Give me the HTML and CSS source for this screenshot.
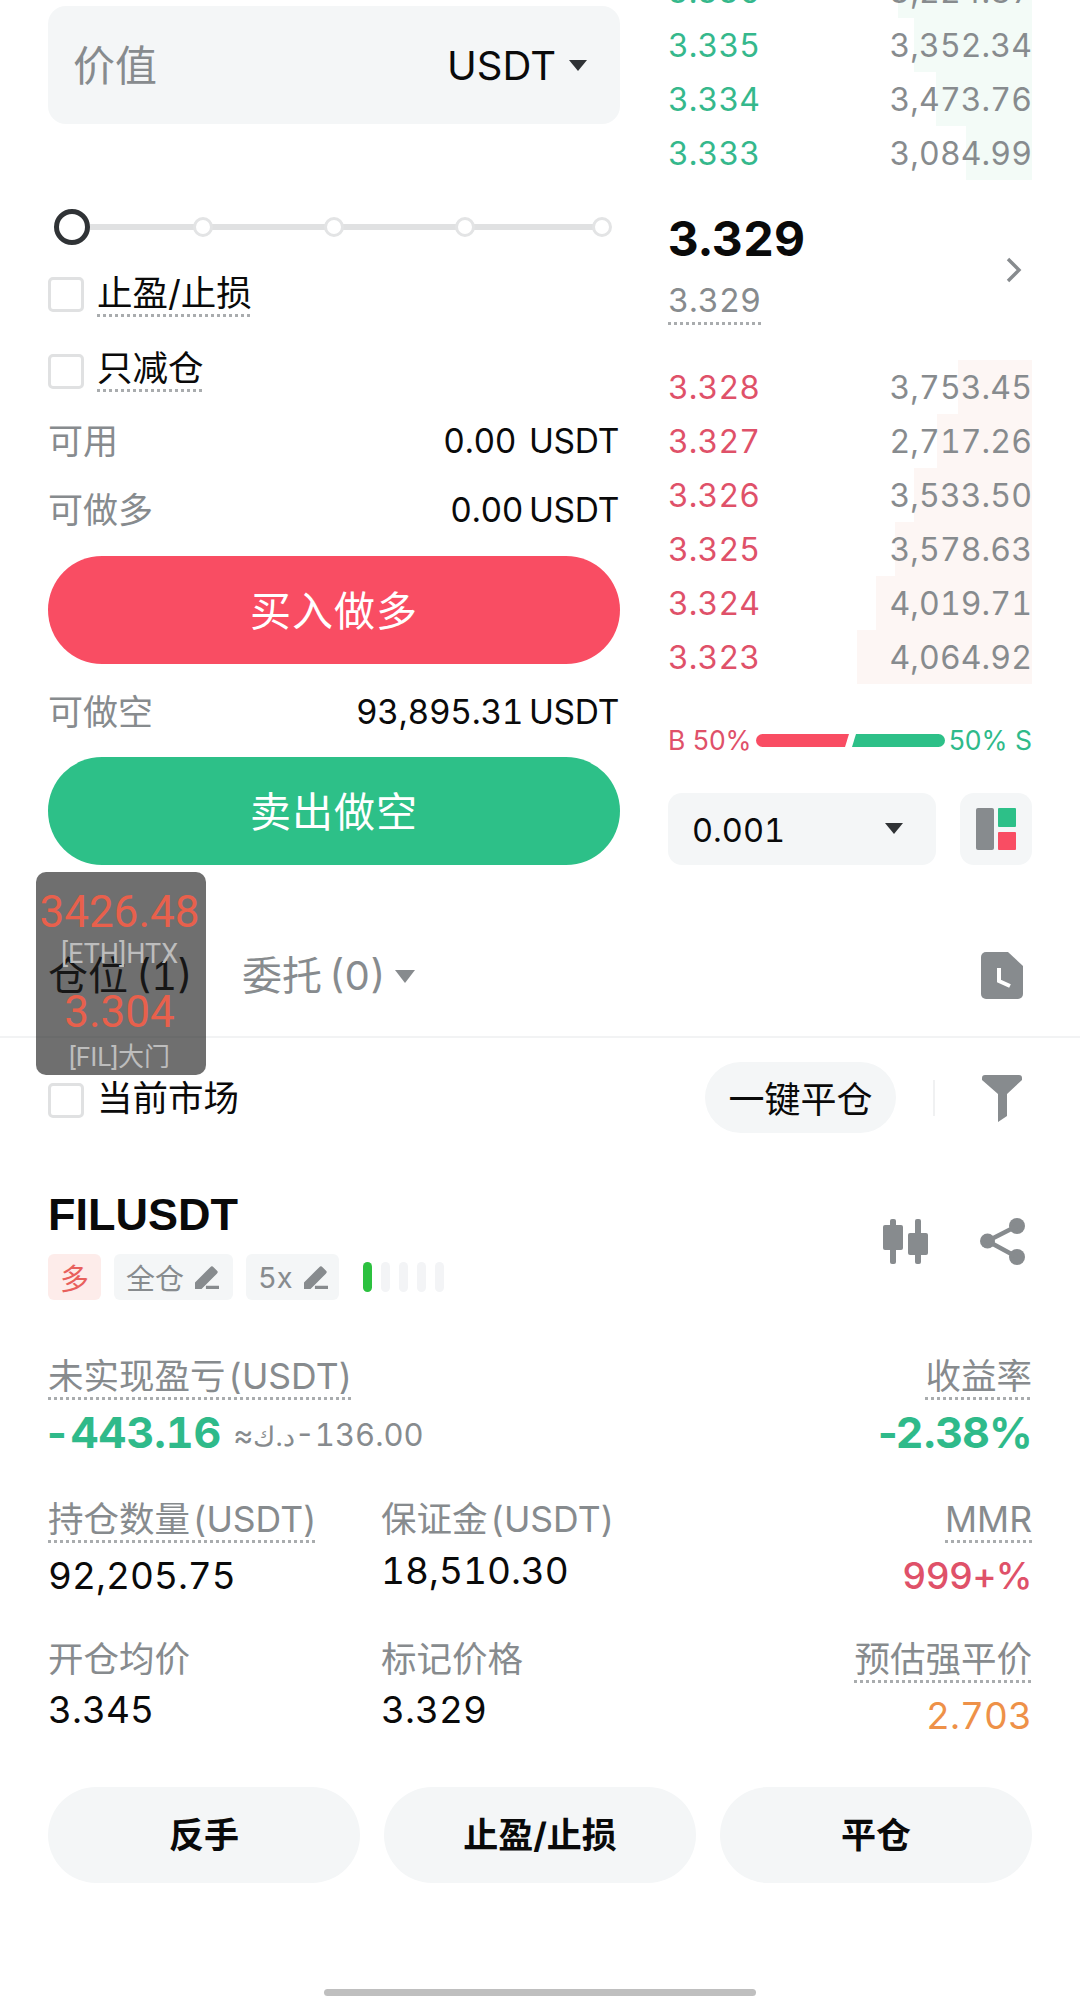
FILE: index.html
```html
<!DOCTYPE html>
<html lang="zh-CN">
<head>
<meta charset="utf-8">
<title>FILUSDT</title>
<link rel="stylesheet" href="styles.css">
</head>
<body>
<div class="page">
  <section class="trade">
    <div class="form">
      <div class="field">
        <span class="field-label">价值</span>
        <span class="field-unit">USDT<i class="caret caret-dark"></i></span>
      </div>
      <div class="slider">
        <span class="knob"></span>
        <span class="stop stop-a"></span>
        <span class="stop"></span>
        <span class="stop"></span>
        <span class="stop stop-z"></span>
      </div>
      <label class="check check-tp"><span class="box"></span><span class="dot">止盈/止损</span></label>
      <label class="check check-ro"><span class="box"></span><span class="dot">只减仓</span></label>
      <div class="kv kv-avail"><span class="muted">可用</span><span><span class="amt">0.00</span> USDT</span></div>
      <div class="kv kv-tight"><span class="muted">可做多</span><span>0.00 USDT</span></div>
      <button class="cta cta-buy">买入做多</button>
      <div class="kv kv-tight"><span class="muted">可做空</span><span>93,895.31 USDT</span></div>
      <button class="cta cta-sell">卖出做空</button>
    </div>

    <div class="book">
      <div class="rows rows-ask">
        <div class="row ask"><i class="depth" style="width:134px"></i><span class="price">3.336</span><span class="qty">3,224.87</span></div>
        <div class="row ask"><i class="depth" style="width:118px"></i><span class="price">3.335</span><span class="qty">3,352.34</span></div>
        <div class="row ask"><i class="depth" style="width:96px"></i><span class="price">3.334</span><span class="qty">3,473.76</span></div>
        <div class="row ask"><i class="depth" style="width:66px"></i><span class="price">3.333</span><span class="qty">3,084.99</span></div>
      </div>
      <div class="mid">
        <div>
          <div class="last">3.329</div>
          <div class="mark"><span class="dot">3.329</span></div>
        </div>
        <svg class="chev" width="16" height="26" viewBox="0 0 16 26"><path d="M2 2l11 11L2 24" fill="none" stroke="#878b8e" stroke-width="3.4"/></svg>
      </div>
      <div class="rows rows-bid">
        <div class="row bid"><i class="depth" style="width:74px"></i><span class="price">3.328</span><span class="qty">3,753.45</span></div>
        <div class="row bid"><i class="depth" style="width:95px"></i><span class="price">3.327</span><span class="qty">2,717.26</span></div>
        <div class="row bid"><i class="depth" style="width:118px"></i><span class="price">3.326</span><span class="qty">3,533.50</span></div>
        <div class="row bid"><i class="depth" style="width:137px"></i><span class="price">3.325</span><span class="qty">3,578.63</span></div>
        <div class="row bid"><i class="depth" style="width:156px"></i><span class="price">3.324</span><span class="qty">4,019.71</span></div>
        <div class="row bid"><i class="depth" style="width:175px"></i><span class="price">3.323</span><span class="qty">4,064.92</span></div>
      </div>
      <div class="ratio">
        <span class="red">B 50%</span>
        <svg width="189" height="13" viewBox="0 0 189 13"><path d="M6.5 0H93l-4 13H6.500a6.500 6.500 0 0 1 0-13z" fill="#f94d63"/><path d="M100 0h82.500a6.500 6.500 0 0 1 0 13H96z" fill="#2dc088"/></svg>
        <span class="green">50% S</span>
      </div>
      <div class="tools">
        <div class="select"><span>0.001</span><i class="caret caret-dark"></i></div>
        <div class="layout">
          <svg width="40" height="42" viewBox="0 0 40 42"><rect width="18" height="42" rx="2" fill="#878b8e"/><rect x="22" width="18" height="19" rx="1" fill="#2dc088"/><rect x="22" y="24" width="18" height="18" rx="1" fill="#f94d63"/></svg>
        </div>
      </div>
    </div>
  </section>

  <nav class="tabs">
    <span class="tab tab-on">仓位 (1)</span>
    <span class="tab">委托 (0)<i class="caret caret-gray"></i></span>
    <svg class="doc" width="42" height="47" viewBox="0 0 42 47"><path d="M5 0h22l15 14v28a5 5 0 0 1-5 5H5a5 5 0 0 1-5-5V5a5 5 0 0 1 5-5z" fill="#878b8e"/><path d="M18 16v13l11 5" fill="none" stroke="#fff" stroke-width="4"/></svg>
  </nav>

  <div class="filter">
    <label class="check"><span class="box"></span><span class="market">当前市场</span></label>
    <div class="filter-right">
      <button class="pill">一键平仓</button>
      <span class="sep"></span>
      <svg class="funnel" width="40" height="47" viewBox="0 0 40 47"><path d="M3 0h34a3 3 0 0 1 3 3v2L25 19v22l-9 6V19L0 5V3a3 3 0 0 1 3-3z" fill="#878b8e"/></svg>
    </div>
  </div>

  <div class="head">
    <div>
      <h1 class="symbol">FILUSDT</h1>
      <div class="tags">
        <span class="tag tag-long">多</span>
        <span class="tag">全仓<svg class="pen" width="24" height="24" viewBox="0 0 22 22"><path d="M0 22v-6L14 2a2 2 0 0 1 3 0l3 3a2 2 0 0 1 0 3L6 22z M10 19h12v3H10z" fill="#878b8e"/></svg></span>
        <span class="tag tag-lev">5x<svg class="pen" width="24" height="24" viewBox="0 0 22 22"><path d="M0 22v-6L14 2a2 2 0 0 1 3 0l3 3a2 2 0 0 1 0 3L6 22z M10 19h12v3H10z" fill="#878b8e"/></svg></span>
        <span class="risk"><i class="on"></i><i></i><i></i><i></i><i></i></span>
      </div>
    </div>
    <div class="head-icons">
      <svg width="46" height="45" viewBox="0 0 46 45"><g fill="#878b8e"><rect x="7" width="6" height="45" rx="2"/><rect y="6" width="20" height="25" rx="2"/><rect x="32" width="6" height="45" rx="2"/><rect x="25" y="14" width="20" height="22" rx="2"/></g></svg>
      <svg width="45" height="47" viewBox="0 0 45 47"><g fill="#878b8e"><circle cx="37" cy="8" r="8"/><circle cx="7.500" cy="23" r="7.500"/><circle cx="37" cy="39" r="8"/></g><path d="M37 8L7.500 23 37 39" fill="none" stroke="#878b8e" stroke-width="4.500"/></svg>
    </div>
  </div>

  <div class="stats">
    <div class="stat stat-wide">
      <div class="label"><span class="dot">未实现盈亏 (USDT)</span></div>
      <div class="value big pnl green">-443.16<span class="approx">≈<bdi>د.ك</bdi>-136.00</span></div>
    </div>
    <div class="stat right">
      <div class="label"><span class="dot">收益率</span></div>
      <div class="value big green">-2.38%</div>
    </div>

    <div class="stat stat-mid">
      <div class="label"><span class="dot">持仓数量 (USDT)</span></div>
      <div class="value">92,205.75</div>
    </div>
    <div class="stat stat-mid stat-up">
      <div class="label">保证金 (USDT)</div>
      <div class="value">18,510.30</div>
    </div>
    <div class="stat stat-mid right">
      <div class="label"><span class="dot">MMR</span></div>
      <div class="value medium red">999+%</div>
    </div>

    <div class="stat stat-low stat-up">
      <div class="label">开仓均价</div>
      <div class="value">3.345</div>
    </div>
    <div class="stat stat-low stat-up">
      <div class="label">标记价格</div>
      <div class="value">3.329</div>
    </div>
    <div class="stat stat-low right">
      <div class="label"><span class="dot">预估强平价</span></div>
      <div class="value orange">2.703</div>
    </div>
  </div>

  <div class="actions">
    <button class="action">反手</button>
    <button class="action">止盈/止损</button>
    <button class="action">平仓</button>
  </div>

  <div class="home-bar"></div>

  <aside class="ticker">
    <div class="tick-price">3426.48</div>
    <div class="tick-name">[ETH]HTX</div>
    <div class="tick-price">3.304</div>
    <div class="tick-name">[FIL]大门</div>
  </aside>
</div>
</body>
</html>
```
FILE: styles.css
```css
* { box-sizing: border-box; }
html, body { margin: 0; padding: 0; background: #fff; }
body {
  font-family: "Inter", "Noto Sans CJK SC", sans-serif;
  font-variant-numeric: tabular-nums;
  color: #0a0a0a;
  overflow: hidden;
}
.page { position: relative; width: 1080px; height: 2000px; overflow: hidden; }
button { font-family: inherit; border: 0; padding: 0; }
i { font-style: normal; display: block; }

.muted { color: #878b8e; }
.red { color: #df5169; }
.green { color: #2fba8a; }
.orange { color: #ee9148; }

.dot {
  text-decoration: underline dotted #a9acae 3px;
  text-underline-offset: 8px;
  text-decoration-skip-ink: none;
}

.caret { width: 0; height: 0; border-style: solid; border-color: transparent; border-width: 11px 9px 0; }
.caret-dark { border-top-color: #303336; }
.caret-gray { border-top-color: #878b8e; border-width: 13px 10px 0; margin-left: 9px; }

/* top area */
.trade {
  display: grid;
  grid-template-columns: 572px 364px;
  column-gap: 48px;
  padding: 0 48px;
  height: 865px;
}
.form { display: flex; flex-direction: column; padding-top: 6px; }
.field {
  height: 118px;
  padding: 0 33px 0 25px;
  display: flex;
  align-items: center;
  justify-content: space-between;
  background: #f4f6f7;
  border-radius: 18px;
}
.field-label { font-size: 42px; color: #878b8e; padding-bottom: 5px; }
.field-unit { display: flex; align-items: center; gap: 13px; font-size: 40px; }
.slider {
  height: 36px;
  margin-top: 85px;
  padding: 0 8px 0 6px;
  display: flex;
  align-items: center;
  gap: 111px;
  background: linear-gradient(#e0e1e2, #e0e1e2) center / calc(100% - 40px) 6px no-repeat;
}
.knob { width: 36px; height: 36px; border: 5.5px solid #303336; border-radius: 50%; background: #fff; flex: none; }
.stop { width: 20px; height: 20px; border: 3px solid #e3e4e5; border-radius: 50%; background: #fff; flex: none; }
.stop-a { margin-left: -8px; }
.stop-z { margin-left: 6px; }

.check { display: flex; align-items: center; gap: 13px; font-size: 35.5px; height: 35px; }
.check-tp { margin-top: 32px; }
.check-ro { margin-top: 42px; }
.check-tp .dot { margin-bottom: 8px; }
.check-ro .dot { margin-bottom: 12px; }
.box { width: 36px; height: 35px; border: 3px solid #e0e1e2; border-radius: 5px; flex: none; background: #fff; }

.kv { display: flex; align-items: center; justify-content: space-between; height: 40px; font-size: 33.5px; letter-spacing: -.3px; padding-right: 1px; }
.kv .muted { font-size: 35px; letter-spacing: 0; margin-bottom: 5px; }
.kv-avail { margin-top: 32px; }
.kv-tight { margin-top: 29px; word-spacing: -3px; }
.amt { margin-right: 4px; }

.cta {
  height: 108px;
  margin-top: 26px;
  padding-bottom: 5px;
  border-radius: 54px;
  color: #fff;
  font-size: 41px;
  letter-spacing: 1px;
}
.cta-buy { background: #f94d63; }
.cta-sell { background: #2dc088; margin-top: 25px; }
.cta-buy + .kv { margin-top: 28px; }

/* order book */
.book { display: flex; flex-direction: column; }
.rows-ask { margin-top: -36px; }
.row {
  position: relative;
  height: 54px;
  display: flex;
  align-items: center;
  justify-content: space-between;
  font-size: 32px;
  letter-spacing: .1px;
}
.depth { position: absolute; right: 0; top: 0; bottom: 0; }
.ask .depth { background: #f3fbf7; }
.bid .depth { background: #fdf6f4; }
.price, .qty { position: relative; }
.ask .price { color: #35b88c; }
.bid .price { color: #df5169; }
.qty { color: #878b8e; }

.mid { display: flex; align-items: center; justify-content: space-between; margin-top: 29px; padding-right: 10px; }
.chev { margin-top: 8px; }
.last { font-size: 48px; line-height: 60px; font-weight: 700; }
.mark { font-size: 32.5px; line-height: 44px; margin-top: 10px; margin-bottom: -1px; color: #878b8e; }
.mark .dot { text-underline-offset: 10px; }
.rows-bid { margin-top: 38px; }

.ratio { display: flex; align-items: center; justify-content: space-between; height: 40px; margin-top: 36px; font-size: 26.5px; font-variant-numeric: normal; }
.tools { display: flex; justify-content: space-between; height: 72px; margin-top: 33px; }
.select {
  width: 268px;
  padding: 0 33px 2px 24px;
  display: flex;
  align-items: center;
  justify-content: space-between;
  background: #f4f6f7;
  border-radius: 14px;
  font-size: 32.5px;
  line-height: 1;
}
.select span { margin-top: 6px; }
.layout { width: 72px; display: flex; align-items: center; justify-content: center; background: #f4f6f7; border-radius: 14px; }

/* tabs */
.tabs {
  height: 173px;
  padding: 51px 57px 0 48px;
  display: flex;
  align-items: flex-start;
  border-bottom: 2px solid #f2f3f4;
}
.tab { display: flex; align-items: center; font-size: 40px; word-spacing: -3px; line-height: 120px; height: 120px; color: #878b8e; }
.tab + .tab { margin-left: 49px; word-spacing: -4px; }
.tab-on { color: #0a0a0a; }
.doc { margin-left: auto; margin-top: 36px; }

/* filter */
.filter {
  height: 71px;
  margin-top: 24px;
  padding: 0 58px 0 48px;
  display: flex;
  align-items: center;
  justify-content: space-between;
}
.filter-right { display: flex; align-items: center; }
.pill { width: 191px; height: 71px; border-radius: 36px; background: #f4f6f7; font-size: 36px; color: #0a0a0a; padding-bottom: 2px; }
.sep { width: 2px; height: 36px; background: #f0f1f2; margin: 0 47px 0 37px; }
.funnel { margin-top: 2px; }
.filter .box { margin-top: 6px; }
.market { margin-bottom: 4px; font-size: 35.5px; }

/* position head */
.head { display: flex; align-items: center; justify-content: space-between; margin-top: 57px; padding: 0 55px 0 48px; }
.symbol { margin: 0; font: 700 45px/50px "Liberation Sans", sans-serif; }
.tags { display: flex; align-items: center; gap: 13px; margin-top: 14px; height: 46px; }
.tag {
  height: 46px;
  padding: 0 14px 0 12px;
  display: flex;
  align-items: center;
  gap: 11px;
  background: #f4f6f7;
  border-radius: 6px;
  font-size: 29px;
  color: #878b8e;
}
.tag-long { background: #fdecea; color: #e8605c; padding: 0 12px; }
.tag-lev { padding-right: 11px; }
.risk { display: flex; gap: 9px; margin-left: 11px; }
.risk i { width: 9px; height: 30px; border-radius: 5px; background: #f3f4f6; }
.risk .on { background: #2cc13f; }
.head-icons { display: flex; align-items: center; gap: 51px; margin-bottom: 8px; }

/* stats */
.stats { display: grid; grid-template-columns: 333px 1fr auto; padding: 0 48px; margin-top: 55px; }
.stat-wide { grid-column: 1 / 3; }
.right { text-align: right; }
.label { font-size: 35.5px; word-spacing: -7px; line-height: 44px; color: #878b8e; }
.value { font-size: 37px; line-height: 44px; margin-top: 12px; }
.value.big { font-size: 43px; line-height: 50px; font-weight: 700; margin-top: 8px; font-variant-numeric: normal; letter-spacing: -.8px; }
.value.pnl { font-variant-numeric: tabular-nums; letter-spacing: -1.2px; margin-left: -5px; }
.value.medium { font-weight: 500; letter-spacing: -.6px; }
.approx { font-size: 31px; font-weight: 400; color: #878b8e; margin-left: 12px; letter-spacing: 0; vertical-align: 2px; }
.approx bdi { font-size: 27px; }
.stat-mid { margin-top: 36px; }
.stat-low { margin-top: 40px; }
.stat-up .value { margin-top: 7px; }
.stat-low.stat-up .value { margin-top: 6px; }

/* actions */
.actions { display: grid; grid-template-columns: repeat(3, 1fr); column-gap: 24px; padding: 0 48px; margin-top: 49px; }
.action { height: 96px; padding-bottom: 5px; border-radius: 48px; background: #f4f6f7; font-size: 35px; font-weight: 700; color: #0a0a0a; }

.home-bar { width: 432px; height: 7px; margin: 106px auto 0; border-radius: 4px; background: #bfbfbf; }

/* floating ticker */
.ticker {
  position: absolute;
  left: 36px;
  top: 872px;
  width: 170px;
  height: 203px;
  padding-right: 3px;
  border-radius: 10px;
  background: rgba(30, 30, 30, .64);
  text-align: center;
  font-family: "Roboto", "Noto Sans CJK SC", sans-serif;
}
.tick-price { font-size: 44px; line-height: 50px; color: #e8604c; white-space: nowrap; }
.tick-name { font-size: 27px; line-height: 34px; color: #bdbdbd; white-space: nowrap; }
.tick-price:first-child { margin-top: 15px; }
.tick-name + .tick-price { margin-top: 16px; }
.tick-name:last-child { margin-top: 3px; font-size: 26px; }
```
